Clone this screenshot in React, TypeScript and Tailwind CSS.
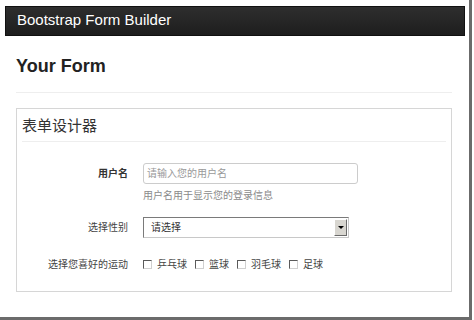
const cjk = "font-['Liberation_Sans','Noto_Sans_CJK_SC',sans-serif]"

const sports = ['乒乓球', '篮球', '羽毛球', '足球']

function Checkbox({ label }: { label: string }) {
  return (
    <label className="flex items-center mr-[8px]">
      <span className="w-[9px] h-[9px] bg-white border border-t-[#5a5a5a] border-l-[#5a5a5a] border-r-[#d0d0d0] border-b-[#d0d0d0]" />
      <span className="ml-[5px] text-[10px] leading-[14px] text-[#444]">{label}</span>
    </label>
  )
}

export default function App() {
  return (
    <div className={`w-[472px] h-[320px] bg-white border-r-[3px] border-b-[3px] border-[#6b6b6b] pt-[6px] ${cjk}`}>
      {/* navbar */}
      <div className="mx-[5px] w-[460px] h-[30px] flex items-center pl-[11px] bg-gradient-to-b from-[#2e2e2e] to-[#1e1e1e] border border-[#111]">
        <span className="text-[15px] leading-[30px] text-white pb-[2px]">Bootstrap Form Builder</span>
      </div>

      <div className="ml-[16px] w-[436px]">
        <h1 className="mt-[20px] text-[18px] leading-[20px] font-bold text-[#222]">Your Form</h1>
        <hr className="mt-[16px] border-0 border-t border-[#eeeeee]" />

        {/* form box */}
        <div className="mt-[15px] h-[184px] border border-[#d6d6d6] px-[5px] pt-[7px]">
          <div className="pb-[5px] border-b border-[#eeeeee] text-[15px] leading-[20px] text-[#333]">表单设计器</div>

          <div className="-ml-[5px] mt-[21px] flex items-center">
            <div className="w-[111px] text-right text-[10px] font-bold text-[#333]">用户名</div>
            <div className="ml-[15px] w-[215px] h-[21px] border border-[#cccccc] rounded-[3px] flex items-center pl-[3px] text-[10px] text-[#999]">
              请输入您的用户名
            </div>
          </div>
          <div className="ml-[121px] mt-[5px] text-[10px] leading-[14px] text-[#8a8a8a]">用户名用于显示您的登录信息</div>

          <div className="-ml-[5px] mt-[14px] flex items-center">
            <div className="w-[111px] text-right text-[10px] text-[#444]">选择性别</div>
            <div className="ml-[15px] w-[206px] h-[21px] border border-[#7a7a7a] border-b-[#c8c8c8] border-r-[#c8c8c8] flex items-center justify-between pl-[7px] pr-[1px] bg-white">
              <span className="text-[10px] text-[#333]">请选择</span>
              <span className="w-[13px] h-[17px] bg-[#d8d6d0] border border-t-white border-l-white border-r-[#6a6a6a] border-b-[#6a6a6a] flex items-center justify-center">
                <span className="w-0 h-0 border-l-[3px] border-r-[3px] border-t-[3px] border-l-transparent border-r-transparent border-t-black" />
              </span>
            </div>
          </div>

          <div className="-ml-[5px] mt-[19px] flex items-center">
            <div className="w-[111px] text-right text-[10px] text-[#444]">选择您喜好的运动</div>
            <div className="ml-[15px] flex items-center">
              {sports.map((s) => (
                <Checkbox key={s} label={s} />
              ))}
            </div>
          </div>
        </div>
      </div>
    </div>
  )
}
